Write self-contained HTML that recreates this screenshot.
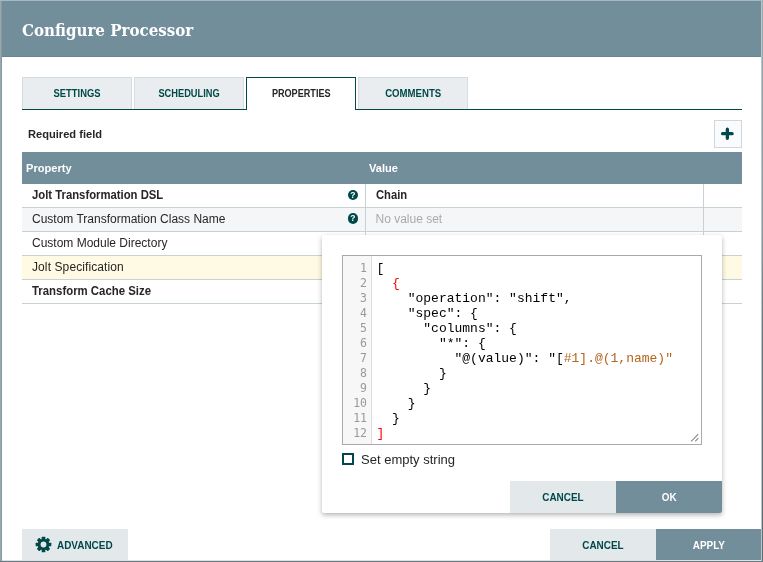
<!DOCTYPE html>
<html lang="en">
<head>
<meta charset="utf-8">
<title>Configure Processor</title>
<style>
*{box-sizing:border-box;margin:0;padding:0}
html,body{width:763px;height:562px;overflow:hidden}
body{position:relative;background:#a8b8c0;font-family:"Liberation Sans",sans-serif;color:#262626;font-size:13px}
.abs{position:absolute}
#dialog{will-change:transform;left:2px;top:1px;width:759px;height:559px;background:#fff;overflow:hidden}
.edge{position:absolute}
#hdr{left:0;top:0;width:760px;height:56px;background:#728e9b;border-bottom:1px solid #688696}
#title{left:20px;top:17.75px;transform:scaleX(.974);transform-origin:0 0;font-family:"DejaVu Serif","Liberation Serif",serif;font-stretch:condensed;font-weight:bold;font-size:17.2px;color:#fff;line-height:22px;white-space:nowrap}
.tab{top:76px;width:110px;height:32px;background:#e9edef;border:1px solid #d3dde0;border-bottom:none;color:#004849;font-size:10px;font-weight:bold;text-align:center;line-height:32px}
.tab.sel{background:#fff;border:1px solid #004849;border-bottom:none;color:#262626;height:33px}
#tabline{left:20px;top:108px;width:720px;height:1px;background:#004849}
#req{left:26px;top:126px;font-weight:bold;font-size:11.5px;line-height:14px;white-space:nowrap;transform:scaleX(.965);transform-origin:0 0}
#plus{left:712px;top:119px;width:28px;height:28px;border:1px solid #cfd9dd;background:#fafbfc}
#thead{left:20px;top:151px;width:720px;height:32px;background:#728e9b;color:#fff;font-weight:bold;font-size:11.5px;line-height:32px}
#thead span{transform:scaleX(.965);transform-origin:0 0;white-space:nowrap}
.row{left:20px;width:720px;height:24px;border-bottom:1px solid #c7d2d7;line-height:23px;font-size:12px;white-space:nowrap}
.row .n{position:absolute;left:10px;top:0}
.row.b{font-weight:bold}
.row.b .n{transform:scaleX(.935);transform-origin:0 0}
.row.alt{background:#f4f6f7}
.row.act{background:#fffae3}
.vline{top:183px;width:1px;background:#c7d2d7}
.q{width:10.5px;height:10.5px;border-radius:50%;background:#004849;color:#fff;font-size:8.5px;font-weight:bold;line-height:10.5px;text-align:center}
.btn{height:32px;line-height:32px;text-align:center;font-size:11px;font-weight:bold;color:#004849;background:#e3e8eb;white-space:nowrap}
.tab span{display:inline-block;transform:scaleX(.935)}
.btn span{display:inline-block;transform:scaleX(.903)}
.btn.pri{background:#728e9b;color:#fff}
#popup{left:320px;top:234px;width:400px;height:278px;background:#fff;border-radius:2px;overflow:hidden;box-shadow:0 2px 5px rgba(0,0,0,.3)}
#ed{left:20px;top:20px;width:360px;height:190px;border:1px solid #aaa;background:#fff;overflow:hidden}
#gut{left:0;top:0;width:29px;height:188px;background:#f7f7f7;border-right:1px solid #ddd}
.ln{position:absolute;margin-top:1px;left:0;width:24px;text-align:right;font-family:"DejaVu Sans Mono","Liberation Mono",monospace;font-size:11.5px;line-height:15px;color:#999;height:15px}
.cl{position:absolute;margin-top:1px;left:33.5px;font-family:"Liberation Mono",monospace;font-size:13px;line-height:15px;height:15px;white-space:pre;color:#000}
.r{color:#f00}.o{color:#b5651d}
#chk{left:20px;top:218px;width:12.2px;height:12px;border:2px solid #004849;background:#fff}
#chkl{left:39.1px;top:216.9px;font-size:13px;line-height:16px;white-space:nowrap;color:#262626}
</style>
</head>
<body>
<div class="edge" style="left:0;top:1px;width:1px;height:561px;background:#97a8af"></div>
<div class="edge" style="left:1px;top:1px;width:1px;height:561px;background:#8799a1"></div>
<div class="edge" style="left:761px;top:1px;width:1px;height:560px;background:#bcc4c8"></div>
<div class="edge" style="left:762px;top:1px;width:1px;height:561px;background:linear-gradient(#9aabb3,#8a9aa3 40%,#66777f 60%,#5a6b74)"></div>
<div class="edge" style="left:2px;top:560px;width:759px;height:1px;background:#dde1e4"></div>
<div class="edge" style="left:0;top:561px;width:763px;height:1px;background:#6a7a82"></div>
<div id="dialog" class="abs">
  <div id="hdr" class="abs"></div>
  <div id="title" class="abs">Configure Processor</div>

  <div class="tab abs" style="left:20px"><span style="transform:scaleX(.94)">SETTINGS</span></div>
  <div class="tab abs" style="left:132px"><span style="transform:scaleX(.926)">SCHEDULING</span></div>
  <div id="tabline" class="abs"></div>
  <div class="tab sel abs" style="left:244px"><span style="transform:scaleX(.91)">PROPERTIES</span></div>
  <div class="tab abs" style="left:356px"><span style="transform:scaleX(.96)">COMMENTS</span></div>

  <div id="req" class="abs">Required field</div>
  <div id="plus" class="abs">
    <svg class="abs" style="left:5px;top:6px" width="16" height="14" viewBox="0 0 16 14"><path d="M7.35 2.2V11.25M2.6 6.72H12.1" stroke="#004849" stroke-width="3.3" stroke-linecap="round" fill="none"/></svg>
  </div>

  <div id="thead" class="abs"><span class="abs" style="left:4px">Property</span><span class="abs" style="left:347px">Value</span></div>

  <div class="row b abs" style="top:183px"><span class="n" style="transform:scaleX(.942)">Jolt Transformation DSL</span><span class="n" style="left:353.5px">Chain</span></div>
  <div class="row alt abs" style="top:207px"><span class="n">Custom Transformation Class Name</span><span class="n" style="left:353.5px;color:#aaa">No value set</span></div>
  <div class="row abs" style="top:231px"><span class="n">Custom Module Directory</span></div>
  <div class="row act abs" style="top:255px"><span class="n" style="letter-spacing:.1px">Jolt Specification</span></div>
  <div class="row b abs" style="top:279px"><span class="n" style="transform:scaleX(.949)">Transform Cache Size</span></div>
  <div class="vline abs" style="left:363px;height:119px"></div>
  <div class="vline abs" style="left:701px;height:119px"></div>
  <div class="q abs" style="left:345.7px;top:188.5px">?</div>
  <div class="q abs" style="left:345.7px;top:212.4px">?</div>

  <div class="btn abs" style="left:20px;top:528px;width:106px;text-align:left;padding-left:35px"><span style="transform-origin:0 50%">ADVANCED</span></div>
  <svg class="abs" style="left:32.9px;top:535.3px" width="17" height="17" viewBox="0 0 17 17"><g fill="#004849"><circle cx="8.5" cy="8.5" r="5.8"/><rect x="6.7" y="0.7" width="3.6" height="15.6" rx="0.5"/><rect x="6.7" y="0.7" width="3.6" height="15.6" rx="0.5" transform="rotate(45 8.5 8.5)"/><rect x="6.7" y="0.7" width="3.6" height="15.6" rx="0.5" transform="rotate(90 8.5 8.5)"/><rect x="6.7" y="0.7" width="3.6" height="15.6" rx="0.5" transform="rotate(135 8.5 8.5)"/></g><circle cx="8.5" cy="8.5" r="2.9" fill="#e3e8eb"/></svg>
  <div class="btn abs" style="left:548px;top:528px;width:106px"><span>CANCEL</span></div>
  <div class="btn pri abs" style="left:654px;top:528px;width:106px"><span>APPLY</span></div>

  <div id="popup" class="abs">
    <div id="ed" class="abs">
      <div id="gut" class="abs">
        <div class="ln" style="top:4px">1</div><div class="ln" style="top:19px">2</div><div class="ln" style="top:34px">3</div><div class="ln" style="top:49px">4</div><div class="ln" style="top:64px">5</div><div class="ln" style="top:79px">6</div><div class="ln" style="top:94px">7</div><div class="ln" style="top:109px">8</div><div class="ln" style="top:124px">9</div><div class="ln" style="top:139px">10</div><div class="ln" style="top:154px">11</div><div class="ln" style="top:169px">12</div>
      </div>
      <div class="cl" style="top:4px">[</div>
      <div class="cl" style="top:19px">  <span class="r">{</span></div>
      <div class="cl" style="top:34px">    "operation": "shift",</div>
      <div class="cl" style="top:49px">    "spec": {</div>
      <div class="cl" style="top:64px">      "columns": {</div>
      <div class="cl" style="top:79px">        "*": {</div>
      <div class="cl" style="top:94px">          "@(value)": "[<span class="o">#1].@(1,name)"</span></div>
      <div class="cl" style="top:109px">        }</div>
      <div class="cl" style="top:124px">      }</div>
      <div class="cl" style="top:139px">    }</div>
      <div class="cl" style="top:154px">  }</div>
      <div class="cl" style="top:169px"><span class="r">]</span></div>
      <svg class="abs" style="right:2px;bottom:2px" width="10" height="10" viewBox="0 0 10 10"><path d="M9.3 2.2L2.2 9.3M9.3 6.2L6.2 9.3" stroke="#888" stroke-width="1.1" fill="none"/></svg>
    </div>
    <div id="chk" class="abs"></div>
    <div id="chkl" class="abs">Set empty string</div>
    <div class="btn abs" style="left:188px;top:246px;width:106px;height:32px;line-height:33px"><span>CANCEL</span></div>
    <div class="btn pri abs" style="left:294px;top:246px;width:106px;height:32px;line-height:33px"><span>OK</span></div>
  </div>
</div>
</body>
</html>
